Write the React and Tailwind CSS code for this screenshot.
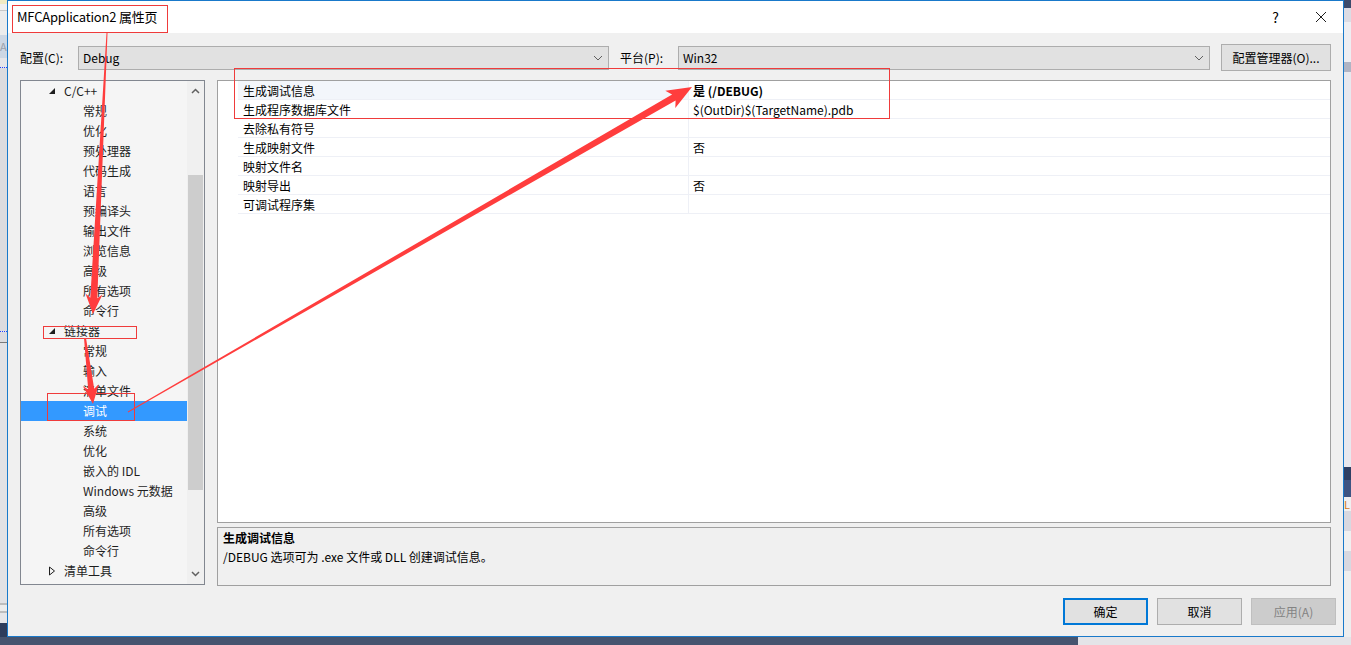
import React from 'react'

const tree = [
  { label: 'C/C++', top: true, open: true },
  { label: '常规' }, { label: '优化' }, { label: '预处理器' }, { label: '代码生成' },
  { label: '语言' }, { label: '预编译头' }, { label: '输出文件' }, { label: '浏览信息' },
  { label: '高级' }, { label: '所有选项' }, { label: '命令行' },
  { label: '链接器', top: true, open: true },
  { label: '常规' }, { label: '输入' }, { label: '清单文件' }, { label: '调试', selected: true },
  { label: '系统' }, { label: '优化' }, { label: '嵌入的 IDL' }, { label: 'Windows 元数据' },
  { label: '高级' }, { label: '所有选项' }, { label: '命令行' },
  { label: '清单工具', top: true, open: false },
]

const props = [
  { name: '生成调试信息', value: '是 (/DEBUG)', bold: true, active: true },
  { name: '生成程序数据库文件', value: '$(OutDir)$(TargetName).pdb' },
  { name: '去除私有符号', value: '' },
  { name: '生成映射文件', value: '否' },
  { name: '映射文件名', value: '' },
  { name: '映射导出', value: '否' },
  { name: '可调试程序集', value: '' },
]

// tapered annotation arrow, like the ones a screenshot tool draws
function arrow(x1, y1, x2, y2, w1, w2, hl, hw) {
  const len = Math.hypot(x2 - x1, y2 - y1)
  const ux = (x2 - x1) / len, uy = (y2 - y1) / len
  const nx = -uy, ny = ux
  const bx = x2 - ux * hl, by = y2 - uy * hl
  const sx = bx + ux * 4, sy = by + uy * 4
  const pts = [
    [x1 + nx * w1 / 2, y1 + ny * w1 / 2],
    [sx + nx * w2 / 2, sy + ny * w2 / 2],
    [bx + nx * hw / 2, by + ny * hw / 2],
    [x2, y2],
    [bx - nx * hw / 2, by - ny * hw / 2],
    [sx - nx * w2 / 2, sy - ny * w2 / 2],
    [x1 - nx * w1 / 2, y1 - ny * w1 / 2],
  ]
  return pts.map(p => p[0].toFixed(1) + ',' + p[1].toFixed(1)).join(' ')
}

function Chevron() {
  return (
    <svg width="10" height="6" viewBox="0 0 10 6" className="shrink-0">
      <polyline points="1,1 5,5 9,1" fill="none" stroke="#606060" strokeWidth="1" />
    </svg>
  )
}

function Select({ value, width }) {
  return (
    <div className={`flex h-[24px] items-center justify-between border border-[#adadad] bg-[#e1e1e1] pl-[4px] pr-[5px] ${width}`}>
      <span>{value}</span>
      <Chevron />
    </div>
  )
}

function Expander({ open }) {
  if (open) {
    return (
      <svg width="8" height="8" viewBox="0 0 8 8">
        <polygon points="7,1 7,7 1,7" fill="#1e1e1e" />
      </svg>
    )
  }
  return (
    <svg width="8" height="10" viewBox="0 0 8 10">
      <polygon points="1.5,1 6.5,5 1.5,9" fill="none" stroke="#1e1e1e" strokeWidth="1" />
    </svg>
  )
}

function Tree() {
  return (
    <div className="flex h-[505px] w-[185px] border border-[#828790] bg-[#f5f5f5]">
      <div className="flex w-[166px] flex-col">
        {tree.map((t, i) => (
          <div
            key={i}
            className={`flex h-[20px] shrink-0 items-center ${t.top ? 'pl-[27px]' : 'pl-[62px]'} ${t.selected ? 'bg-[#3399ff] text-white' : 'text-[#1e1e1e]'}`}
          >
            {t.top && (
              <span className="flex w-[16px] items-center">
                <Expander open={t.open} />
              </span>
            )}
            {t.label}
          </div>
        ))}
      </div>
      <div className="flex w-[17px] flex-col items-center bg-[#f0f0f0]">
        <div className="flex h-[20px] items-center">
          <svg width="9" height="6" viewBox="0 0 9 6"><polyline points="1,5 4.5,1.5 8,5" fill="none" stroke="#606060" strokeWidth="1.5" /></svg>
        </div>
        <div className="mt-[74px] h-[315px] w-[15px] bg-[#cdcdcd]" />
        <div className="flex-1" />
        <div className="flex h-[20px] items-center">
          <svg width="9" height="6" viewBox="0 0 9 6"><polyline points="1,1 4.5,4.5 8,1" fill="none" stroke="#606060" strokeWidth="1.5" /></svg>
        </div>
      </div>
    </div>
  )
}

function Grid() {
  return (
    <div className="h-[443px] border border-[#a0a0a0] bg-white pl-[20px]">
      {props.map((p, i) => (
        <div key={i} className="flex h-[19px] border-b border-[#eef0f6]">
          <div className={`flex w-[450px] items-center pl-[5px] pt-px ${p.active ? 'bg-[#f3f6fb]' : ''}`}>{p.name}</div>
          <div className={`flex flex-1 items-center border-l border-[#eef0f6] pl-[4px] pt-px ${p.bold ? 'font-bold' : ''}`}>{p.value}</div>
        </div>
      ))}
    </div>
  )
}

function Button({ children, kind }) {
  const cls = {
    primary: 'border-2 border-[#0078d7] bg-[#e1e1e1] text-black',
    normal: 'border border-[#adadad] bg-[#e1e1e1] text-black',
    disabled: 'border border-[#bfbfbf] bg-[#cccccc] text-[#838383]',
  }[kind]
  return <div className={`flex h-[27px] w-[85px] items-center justify-center ${cls}`}>{children}</div>
}

export default function App() {
  return (
    <div className="relative h-[645px] w-[1351px] overflow-hidden bg-[#46546f] text-[12px] leading-[18px] text-black font-['Noto_Sans_CJK_SC','Noto_Sans',sans-serif]">
      <div className="flex h-[637px]">
        {/* IDE behind the dialog, left edge */}
        <div className="flex w-[7px] flex-col bg-[#e6e6e9]">
          <div className="h-[4px] bg-[#f1ebc4]" />
          <div className="h-[6px] bg-[#f0f0f0]" />
          <div className="h-[1px] bg-[#c8c8c8]" />
          <div className="h-[24px] bg-[#ececec]" />
          <div className="h-[23px] bg-[#cdd7e4] text-[11px] leading-[23px] text-[#9aa0aa]">Ap</div>
          <div className="h-[9px]" />
          <div className="h-[1px] border-t border-dotted border-[#2040ff]" />
          <div className="h-[263px] bg-[#dcdcdf]" />
          <div className="h-[1px] border-t border-dotted border-[#2040ff]" />
          <div className="h-[10px] bg-[#dcdcdf]" />
          <div className="h-[1px] bg-[#7a7a7a]" />
          <div className="h-[260px] bg-[#e2e2e5]" />
          <div className="h-[2px] bg-[#bdbdbd]" />
          <div className="h-[6px] bg-[#ececec]" />
          <div className="h-[2px] bg-[#bdbdbd]" />
          <div className="flex-1 bg-[#e6e6e9]" />
          <div className="h-[14px] bg-[#2e3d5c]" />
        </div>

        {/* dialog */}
        <div className="flex w-[1337px] flex-col border border-[#1979ca] bg-[#f0f0f0]">
          <div className="flex h-[32px] shrink-0 items-center bg-white pl-[9px] text-[13px]">
            <span className="tracking-[-0.2px]">MFCApplication2 属性页</span>
            <span className="ml-auto mr-[36px] text-[14px]">?</span>
            <svg width="12" height="12" viewBox="0 0 12 12" className="mr-[16px]">
              <path d="M1 1 L11 11 M11 1 L1 11" stroke="#1e1e1e" strokeWidth="1" />
            </svg>
          </div>

          <div className="flex flex-1 flex-col px-[12px] pt-[11px]">
            <div className="flex h-[27px] items-center">
              <span className="w-[58px]">配置(C):</span>
              <Select value="Debug" width="w-[531px]" />
              <span className="ml-[11px] w-[58px]">平台(P):</span>
              <Select value="Win32" width="w-[532px]" />
              <div className="ml-[11px] flex h-[27px] w-[110px] items-center justify-center border border-[#adadad] bg-[#e1e1e1]">
                配置管理器(O)...
              </div>
            </div>

            <div className="mt-[9px] flex gap-[12px]">
              <Tree />
              <div className="flex w-[1115px] flex-col">
                <Grid />
                <div className="mt-[4px] h-[59px] border border-[#a0a0a0] bg-[#f0f0f0] pl-[5px] leading-[19px]">
                  <div className="font-bold">生成调试信息</div>
                  <div>/DEBUG 选项可为 .exe 文件或 DLL 创建调试信息。</div>
                </div>
              </div>
            </div>

            <div className="-mr-[5px] mt-[12px] flex justify-end gap-[9px]">
              <Button kind="primary">确定</Button>
              <Button kind="normal">取消</Button>
              <Button kind="disabled">应用(A)</Button>
            </div>
          </div>
        </div>

        {/* IDE behind the dialog, right edge */}
        <div className="flex w-[7px] flex-col bg-[#e4e4ea]">
          <div className="h-[8px] bg-[#3b4a6b]" />
          <div className="h-[14px] bg-[#dcdce4]" />
          <div className="h-[40px] bg-[#eeeef2]" />
          <div className="h-[10px] bg-[#b0b4c4]" />
          <div className="h-[395px] bg-[#e8e8ee]" />
          <div className="h-[13px] bg-[#2e3f63]" />
          <div className="h-[17px] bg-[#3e5482]" />
          <div className="h-[14px] bg-[#f0f0f0] text-[11px] leading-[14px] text-[#d07a20]">L</div>
          <div className="h-[20px] bg-[#d8d8e0]" />
          <div className="h-[20px] bg-[#f0f0f0]" />
          <div className="h-[20px] bg-[#d8d8e0]" />
          <div className="flex-1 bg-[#eeeeee]" />
        </div>
      </div>
      <div className="flex h-[8px]">
        <div className="w-[1078px] bg-[#46546f]" />
        <div className="flex-1 bg-[#e4e4e8]" />
      </div>

      {/* red annotations drawn on top of the screenshot */}
      <svg className="pointer-events-none absolute left-0 top-0" width="1351" height="645">
        <g fill="none" stroke="#ef3b3b" strokeWidth="1">
          <rect x="12.5" y="5.5" width="155" height="27" />
          <rect x="234.5" y="68.5" width="655" height="50" />
          <rect x="43.5" y="326.5" width="93" height="12" />
          <rect x="47.5" y="393.5" width="87" height="27" />
        </g>
        <g fill="#ff3d3d">
          <polygon points={arrow(107, 33, 93, 314, 1, 7, 20, 17)} />
          <polygon points={arrow(85, 338, 93, 404, 2, 6, 19, 16)} />
          <polygon points={arrow(128, 412, 692, 87, 1, 7, 25, 20)} />
        </g>
      </svg>
    </div>
  )
}
